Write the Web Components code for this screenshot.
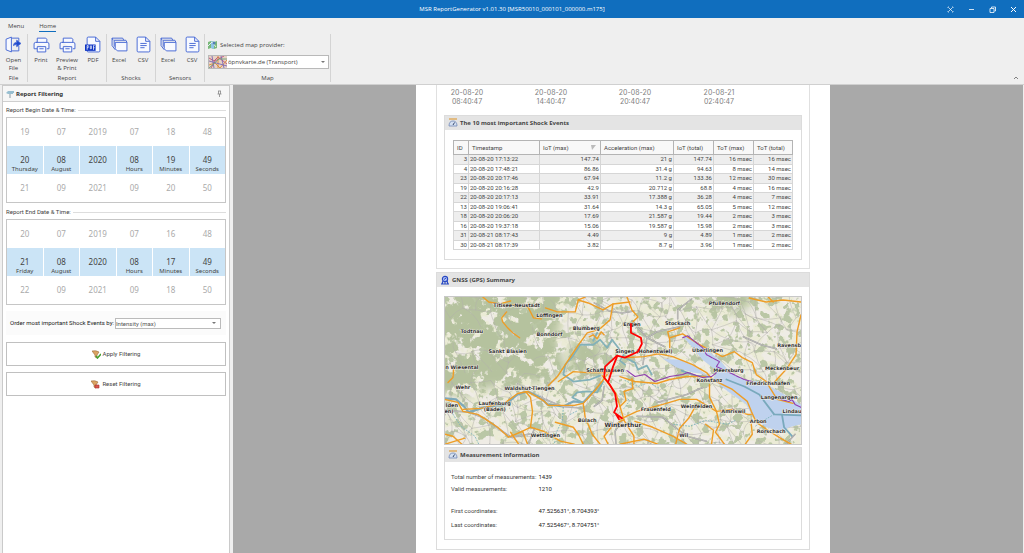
<!DOCTYPE html>
<html lang="en">
<head>
<meta charset="utf-8">
<title>MSR ReportGenerator</title>
<style>
html,body{margin:0;height:100%}
body{font:6px/8px "Open Sans","Noto Sans",sans-serif;color:#444;background:#efefef;overflow:hidden}
</style>
</head>
<body>
<report-app></report-app>
<script>
const define = (name, html) => customElements.define(name, class extends HTMLElement {
  constructor() {
    super();
    const t = document.createElement('template');
    t.innerHTML = '<style>*{box-sizing:border-box}button,select{font:inherit;color:inherit}</style>' + (typeof html === 'function' ? html(this) : html);
    this.attachShadow({ mode: 'open' }).appendChild(t.content.cloneNode(true));
  }
});

const printer = '<path d="M4 6V2h8l1 1v3M4 6H2.500Q1 6 1 7.500V12h3M13 12h2V7.500Q15 6 13.500 6H3M4 10h8v5H4z" fill="#f7f9ff"/><path d="M6 12h4"/>';
const sheets = '<path d="M1 2h10l1 2M2 4l-1-2v7l3 4"/><path d="M3 4h11l1 2M3 4v6"/><path d="M4 6h11v8H6l-2-2z" fill="#f7f9ff"/>';
const page = '<path d="M3 1h7l4 4v9q0 1-1 1H3q-1 0-1-1V2q0-1 1-1z" fill="#f7f9ff"/><path d="M10 1v4h4"/>';
const ICONS = {
  open: '<path d="M6 2h7v3M13 9v5H6" /><path d="M1 3l5-2v14l-5-2z" fill="#f7f9ff"/><path d="M8 9q0-3 3-3V4l4 3-4 3V8q-2 0-3 1z" fill="#1f4bd0"/>',
  print: printer, preview: printer, excel: sheets,
  csv: page + '<path d="M5 7h6M5 9h6M5 11h4"/>',
  pdf: page + '<path d="M0 8h10v6H0z" fill="#0f35c4" stroke="none"/><path d="M2 13V9h1v2H2M5 9v3h1V9M8 13V9h1M8 11h1" stroke="#fff" stroke-width=".7"/>'
};

define('title-bar', `
<style>
:host{display:flex;align-items:center;height:18px;background:#106ebe;color:#fff;position:relative}
h1{flex:1;margin:0;font:inherit;text-align:center}
nav{display:flex;gap:6px;position:absolute;right:3px}
button{width:15px;height:16px;padding:0;border:0;background:none;display:grid;place-items:center}
svg{width:7px;height:7px;fill:none;stroke:#fff}
</style>
<h1>MSR ReportGenerator v1.01.30 [MSR50010_000101_000000.m175]</h1>
<nav>
<button aria-label="Full screen"><svg viewBox="0 0 7 7"><path d="M1 2V1h1M5 1h1v1M6 5v1H5M2 6H1V5M2 2l3 3M5 2L2 5" stroke-width=".7"/></svg></button>
<button aria-label="Minimize"><svg viewBox="0 0 7 7"><path d="M1 3.500h5" stroke-width=".8"/></svg></button>
<button aria-label="Restore"><svg viewBox="0 0 7 7"><path d="M1 2.500h4v4H1zM2.500 2V1h4v4H5.500" stroke-width=".8"/></svg></button>
<button aria-label="Close"><svg viewBox="0 0 7 7"><path d="M1 1l5 5M6 1L1 6"/></svg></button>
</nav>`);

define('ribbon-button', el => `
<style>
:host{display:block;flex:none}
button{width:100%;padding:0;border:0;background:none;display:flex;flex-direction:column;align-items:center;gap:3px;text-align:center}
svg{width:17px;height:17px;fill:none;stroke:#4668d4;stroke-width:.9;stroke-linejoin:round}
span{line-height:8px}
</style>
<button><svg viewBox="0 0 16 16">${ICONS[el.getAttribute('icon')]}</svg><span><slot></slot></span></button>`);

define('ribbon-group', `
<style>
:host{display:flex;flex-direction:column;justify-content:space-between;border-right:1px solid #d4d4d4;height:48px}
div{display:flex;padding-top:2px}
::slotted(ribbon-button){width:var(--button,26px)}
footer{text-align:center}
</style>
<div><slot></slot></div><footer><slot name="label"></slot></footer>`);

define('map-provider', `
<style>
:host{display:block;width:125px;padding:4px 1px 0 3px}
label{display:flex;align-items:center;gap:3px}
label svg{width:9px;height:9px}
.box{display:flex;align-items:center;height:14px;margin-top:6px;border:1px solid #b9b9b9;background:#fff;position:relative}
.box svg{flex:none}
select{appearance:none;flex:1;min-width:0;border:0;padding:0;margin-left:1px;background:none;outline:0;height:12px;line-height:12px}
.arrow{position:absolute;right:3px;width:4px;height:3px;pointer-events:none}
</style>
<label for="p"><svg viewBox="0 0 9 9"><path d="M0 2l3-1 3 1 3-1v7l-3 1-3-1-3 1z" fill="#79b879"/><path d="M3 1l3 1v7L3 8z" fill="#8fc3e8"/><path d="M0 6l4-4 4 5" stroke="#e5edf3" fill="none"/><circle cx="6" cy="3" r="1.500" fill="#527fb5"/></svg>Selected map provider:</label>
<div class="box"><svg width="18" height="12" viewBox="0 0 18 12"><path fill="#e8d2c5" d="M0 0h18v12H0z"/><g fill="none" stroke-width=".9"><path d="M0 2l5 3 4-4 9 7M2 12l4-7 9-5" stroke="#b75178"/><path d="M0 9l6-2 5 5 7-8M9 0v12" stroke="#d98b39"/><path d="M3 0l2 12M12 0l3 12M0 5l18 5" stroke="#7a6ab8"/><path d="M0 12L10 3l8 0" stroke="#71a37b"/></g></svg>
<select id="p"><option>öpnvkarte.de (Transport)</option></select><svg class="arrow" viewBox="0 0 4 3"><path d="M0 0h4L2 2z" fill="#777"/></svg></div>`);

define('ribbon-bar', `
<style>
:host{display:block;height:67px;border-bottom:1px solid #d0d0d0;position:relative}
nav{display:flex;gap:15px;padding:4px 0 0 8px}
a{color:inherit;text-decoration:none;height:10px}
a[aria-current]{border-bottom:1px solid #106ebe}
.groups{display:flex;margin-top:2px}
.shrink{position:absolute;right:4px;bottom:2px;width:7px;height:6px;padding:0;border:0;background:none;display:grid}
.shrink svg{width:6px;height:4px}
</style>
<nav><a href="#menu">Menu</a><a href="#home" aria-current="page">Home</a></nav>
<div class="groups">
<ribbon-group style="--button:27px"><ribbon-button icon="open">Open<br>File</ribbon-button><span slot="label">File</span></ribbon-group>
<ribbon-group><ribbon-button icon="print">Print</ribbon-button><ribbon-button icon="preview">Preview<br>&amp; Print</ribbon-button><ribbon-button icon="pdf">PDF</ribbon-button><span slot="label">Report</span></ribbon-group>
<ribbon-group style="--button:24px"><ribbon-button icon="excel">Excel</ribbon-button><ribbon-button icon="csv">CSV</ribbon-button><span slot="label">Shocks</span></ribbon-group>
<ribbon-group style="--button:24px"><ribbon-button icon="excel">Excel</ribbon-button><ribbon-button icon="csv">CSV</ribbon-button><span slot="label">Sensors</span></ribbon-group>
<ribbon-group><map-provider></map-provider><span slot="label">Map</span></ribbon-group>
</div>
<button class="shrink" aria-label="Collapse the ribbon"><svg viewBox="0 0 6 4"><path d="M1 3l2-2 2 2" fill="none" stroke="#666" stroke-width=".8"/></svg></button>`);

define('date-wheel', el => {
  const rows = el.getAttribute('values').split(';').map(r => r.split(','));
  const names = [el.getAttribute('weekday'), 'August', '', 'Hours', 'Minutes', 'Seconds'];
  return `
<style>
:host{display:block;margin-bottom:4px}
.title{display:flex;align-items:center;gap:2px;height:10px;margin-bottom:2px}
.title::after{content:"";flex:1;border-top:1px solid #ddd}
.wheel{display:grid;grid-template-columns:repeat(6,1fr);grid-template-rows:repeat(3,28px);column-gap:1px;border:1px solid #c6c6c6;background:#fff;height:86px}
.wheel div{font:8px/10px "Noto Sans","Open Sans",sans-serif;text-align:center;color:#aaa;padding-top:9px}
.wheel .on{background:#cbe4f6;color:#444}
small{display:block;font-size:6px;line-height:8px}
</style>
<div class="title">${el.getAttribute('title-text')}</div>
<div class="wheel" role="group">${rows.map((r, i) => r.map((v, j) => `<div class="${i === 1 ? 'on' : ''}">${v}${i === 1 ? `<small>${names[j]}</small>` : ''}</div>`).join('')).join('')}</div>`;
});

define('filter-button', el => `
<style>
:host{display:block;margin-bottom:6px}
button{width:100%;height:24px;border:1px solid #c0c0c0;background:#fff;display:flex;align-items:center;justify-content:center;gap:2px;padding:0}
svg{width:9px;height:9px}
</style>
<button><svg viewBox="0 0 9 9"><path d="M0 1q4-1 7 1L5 5v3L3 7V5z" fill="#dba463" stroke="#9a6a38" stroke-width=".6"/>${el.hasAttribute('reset') ? '<path d="M4 5h4v3H4z" fill="#db5750" stroke="#a52f2c" stroke-width=".6"/>' : '<path d="M4 6l1.500 2L9 4" fill="none" stroke="#45a031" stroke-width="1.500"/>'}</svg><slot></slot></button>`);

define('filter-panel', `
<style>
:host{display:block;flex:none;width:228px;margin:0 3px 0 2px;background:#fff;border:1px solid #cacaca;border-bottom:0;font-family:Roboto,"Liberation Sans",sans-serif}
header{display:flex;align-items:center;height:16px;padding:0 6px 0 3px;gap:2px;background:#f6f6f6;border-bottom:1px solid #cfcfcf}
h2{margin:0;flex:1;font:bold 6px/8px "Noto Sans",sans-serif;color:#333}
header svg{width:8px;height:8px}
main{padding:3px 3px 0 3px}
.order{display:flex;align-items:center;gap:1px;height:24px;margin:6px 0 7px;padding:0 5px 0 4px;background:#fbfbfb;color:#222}
.order label{flex:none;white-space:nowrap}
.box{flex:1;height:11px;border:1px solid #bbb;background:#fff;position:relative;display:flex;color:#555}
select{appearance:none;flex:1;min-width:0;border:0;padding:0;outline:0;background:none;height:9px;line-height:9px}
.box svg{position:absolute;right:4px;top:3px;width:4px;height:3px;pointer-events:none}
</style>
<header><svg viewBox="0 0 8 8"><path d="M4 1v7" stroke="#899aa5"/><path d="M0 3l2-2h5v3H2zM6 1h2v2H6z" fill="#98bfd1"/></svg><h2>Report Filtering</h2><svg viewBox="0 0 8 8" fill="none" stroke="#888" stroke-width=".8"><path d="M3 1h3M3.500 1v3M5.500 1v3M2.500 4h4M4.500 4v3"/></svg></header>
<main>
<date-wheel title-text="Report Begin Date &amp; Time:" weekday="Thursday" values="19,07,2019,07,18,48;20,08,2020,08,19,49;21,09,2021,09,20,50"></date-wheel>
<date-wheel title-text="Report End Date &amp; Time:" weekday="Friday" values="20,07,2019,07,16,48;21,08,2020,08,17,49;22,09,2021,09,18,50"></date-wheel>
<div class="order"><label for="o">Order most important Shock Events by:</label><div class="box"><select id="o"><option>Intensity (max)</option></select><svg viewBox="0 0 4 3"><path d="M0 0h4L2 2z" fill="#777"/></svg></div></div>
<filter-button>Apply Filtering</filter-button>
<filter-button reset>Reset Filtering</filter-button>
</main>`);

const gauge = '<path d="M1 1h8" stroke="#e0a040" stroke-width="1.200"/><path d="M1 8q0-5 4-5t4 5z" fill="#d4e0f1" stroke="#7289b8" stroke-width=".8"/><path d="M5 7l1.500-2.500" stroke="#22355c" stroke-width=".9"/>';
const sat = '<path d="M1 9h8M2 9l1-3M8 9L7 6" fill="none" stroke="#2748c2" stroke-width="1.200"/><circle cx="5" cy="4" r="2.600" fill="#b9c8f8" stroke="#2748c2" stroke-width="1.200"/><path d="M4 4.500L6 3M5 7v2" stroke="#2748c2"/>';
define('report-section', el => `
<style>
:host{display:block;border:1px solid #dcdcdc;background:#fff}
header{display:flex;align-items:center;gap:2px;height:14px;padding-left:3px;background:#e4e4e4}
svg{width:10px;height:10px}
h2{margin:0;font:bold 6px/8px "Noto Sans",sans-serif;color:#444}
</style>
<header><svg viewBox="0 0 10 10">${el.getAttribute('icon') === 'gps' ? sat : gauge}</svg><h2>${el.getAttribute('heading')}</h2></header><slot></slot>`);

const EVENTS = `3|20-08-20 17:13:22|147.74|21 g|147.74|16 msec|16 msec
4|20-08-20 17:48:21|86.86|31.4 g|94.63|8 msec|14 msec
23|20-08-20 20:17:46|67.94|11.2 g|133.36|12 msec|30 msec
19|20-08-20 20:16:28|42.9|20.712 g|68.8|4 msec|16 msec
22|20-08-20 20:17:13|33.91|17.388 g|36.28|4 msec|7 msec
13|20-08-20 19:06:41|31.64|14.3 g|65.05|5 msec|12 msec
18|20-08-20 20:06:20|17.69|21.587 g|19.44|2 msec|3 msec
16|20-08-20 19:37:18|15.06|19.587 g|15.98|2 msec|3 msec
31|20-08-21 08:17:43|4.49|9 g|4.89|1 msec|2 msec
30|20-08-21 08:17:39|3.82|8.7 g|3.96|1 msec|2 msec`.split('\n').map(r => r.split('|'));

define('shock-table', `
<style>
:host{display:block;padding:10px 8px 9px}
table{width:100%;height:110px;table-layout:fixed;border-collapse:collapse}
th,td{border:1px solid #d6d6d6;padding:0 1px;line-height:8px;text-align:right;white-space:nowrap}
thead tr{height:14px}
th{font-weight:400;text-align:left;background:#f8f8f8;border-color:#b4b4b4;padding-left:3px}
td:nth-child(2){text-align:left}
tbody tr:nth-child(odd){background:#eee}
th svg{float:right;width:5px;height:5px;margin:1px 3px 0 0}
</style>
<table><colgroup><col style="width:15px"><col style="width:71px"><col style="width:61px"><col style="width:73px"><col style="width:40px"><col style="width:40px"><col></colgroup>
<thead><tr><th>ID</th><th>Timestamp</th><th>IoT (max)<svg viewBox="0 0 5 5"><path d="M0 0h5L1 5z" fill="#bbb"/></svg></th><th>Acceleration (max)</th><th>IoT (total)</th><th>ToT (max)</th><th>ToT (total)</th></tr></thead>
<tbody>${EVENTS.map(r => '<tr>' + r.map(c => `<td>${c}</td>`).join('') + '</tr>').join('')}</tbody></table>`);

const ROADS = [
 '38,0 44,5 55,7 66,4','62,15 57,21 58,25 63,31 68,36 75,41','66,8 78,8 84,11 89,21 97,22','101,11 113,15 131,15 134,3 144,6 159,13 169,7 186,5',
 '169,7 166,23 157,31 150,34 143,36 133,50 123,65 113,80 104,89','145,40 149,38 153,42 157,35 160,38','9,70 8,81 3,86','0,103 13,106 18,115 33,118 41,123 53,131 64,141 78,135 86,131 88,115 86,101 81,95',
 '18,113 36,112 61,106 73,97 83,95 100,105 104,109 130,109 139,107 150,95 157,86 163,78','111,126 129,131 134,138 139,148','78,135 83,148','66,136 74,148','86,131 99,135 116,145 130,148',
 '139,107 141,121 148,138 156,148','114,85 129,75 143,76 156,76 169,76','0,138 8,140 17,148','306,1 323,5 340,3 358,5','183,0 188,13 194,20 189,25','236,31 224,35 226,43 226,51',
 '226,41 239,37 256,48 279,60 291,55 299,61 309,66 313,78 323,85','329,88 343,73 353,58 354,35 358,18','209,56 229,60 249,68 263,76 269,83 289,93 304,105 308,115 313,126 326,135 339,143 348,148',
 '176,80 191,85 213,87 226,83 243,80 262,80','176,123 193,115 219,108 236,103 253,103 273,115 289,113 304,118 308,118','191,125 209,131 229,140 243,148','266,88 266,101 273,115 276,128 272,136 281,148',
 '188,82 189,92 180,95 182,104 176,110 180,124','232,148 236,132 245,122 253,108','180,123 168,130 160,140 164,148','180,124 190,140 190,148','308,128 309,138 302,148','323,85 329,95 334,103 350,107','183,61 200,60 216,57','141,0 134,3','176,148 200,143 214,148','158,79 165,88 172,97 176,110','0,148 20,142','325,0 330,5','262,128 270,134 268,148'
];
const GREY = ['193,120 219,121 243,140 263,145','213,106 243,98 259,91','188,24 203,41 221,50','236,30 213,35 203,41 199,68','234,22 234,13 248,2','0,114 24,116 40,122 66,141 90,137','90,132 84,148','150,6 165,14 178,16 190,14','150,110 158,104 160,90','178,124 171,135 172,148','343,148 352,138','300,40 318,48 333,52','96,101 118,110 140,112'];
const TEAL = ['175,52 168,43 163,51 156,43 149,48 136,48 128,60 121,68 119,78 129,85 146,83 156,79','159,85 153,96 143,95 133,96 128,101 138,106','183,62 191,66 194,73 203,69 208,78','181,56 176,64 181,68','153,36 149,44'];
const LABELS = [[72,10,'Titisee-Neustadt'],[105,20,'Löffingen'],[27,36,'Todtnau'],[105,39,'Bonndorf'],[142,33,'Blumberg'],[63,56,'Sankt Blasien'],[17,72,'n Wiesental'],[18,93,'Wehr'],[85,94,'Waldshut-Tiengen'],[50,109,'Laufenburg'],[50,115,'(Baden)'],[7,111,'lden'],[4,117,'en)'],[143,126,'Bülach'],[101,141,'Wettingen'],[161,75,'Schaffhausen'],[200,56,'Singen (Hohentwiel)'],[188,29,'Engen'],[234,28,'Stockach'],[281,8,'Pfullendorf'],[264,55,'Überlingen'],[346,50,'Ravensb'],[285,75,'Meersburg'],[339,73,'Meckenbeur'],[266,85,'Konstanz'],[325,88,'Friedrichshafen'],[336,103,'Langenargen'],[349,117,'Lindau'],[315,127,'Arbon'],[328,137,'Rorschach'],[290,117,'Amriswil'],[253,112,'Weinfelden'],[212,115,'Frauenfeld'],[240,141,'Wil']];
const line = p => `<polyline points="${p}"/>`;

function minorRoads() {
  let seed = 7;
  const rnd = () => (seed = (seed * 16807) % 2147483647) / 2147483647;
  const cols = 25, rows = 11, pts = [];
  for (let r = 0; r <= rows; r++) for (let c = 0; c <= cols; c++) pts.push([Math.round(c * 15 - 4 + rnd() * 13), Math.round(r * 15 - 6 + rnd() * 13)]);
  let d = '';
  const link = (a, b) => { d += `M${a}Q${Math.round((a[0] + b[0]) / 2 + rnd() * 8 - 4)},${Math.round((a[1] + b[1]) / 2 + rnd() * 8 - 4)} ${b}`; };
  for (let r = 0; r < rows; r++) for (let c = 0; c < cols; c++) {
    const a = pts[r * (cols + 1) + c];
    const keep = c < 8 && r < 6 ? .35 : .85;
    if (rnd() < keep) link(a, pts[r * (cols + 1) + c + 1]);
    if (rnd() < keep) link(a, pts[(r + 1) * (cols + 1) + c]);
    if (rnd() < keep - .3) link(a, pts[(r + 1) * (cols + 1) + c + 1]);
  }
  return d;
}

define('gnss-map', `
<style>
:host{display:block}
svg{display:block;width:100%;fill:none;stroke-linejoin:round;stroke-linecap:round}
text{font:bold 5px "DejaVu Sans",sans-serif;fill:#333;stroke:#f4f1e8;stroke-width:1px;paint-order:stroke;text-anchor:middle}
.city{font-size:6px}
</style>
<svg viewBox="0 0 358 148" role="img" aria-label="GNSS track from Engen to Winterthur">
<defs>
<filter id="sparse" x="0" y="0" width="100%" height="100%" color-interpolation-filters="sRGB"><feTurbulence type="fractalNoise" baseFrequency=".12" numOctaves="3" seed="4"/><feColorMatrix values="0 0 0 0 .73 0 0 0 0 .78 0 0 0 0 .65 12 0 0 0 -6.4"/></filter>
<filter id="dense" x="0" y="0" width="100%" height="100%" color-interpolation-filters="sRGB"><feTurbulence type="fractalNoise" baseFrequency=".08" numOctaves="4" seed="9"/><feColorMatrix values="0 0 0 0 .71 0 0 0 0 .76 0 0 0 0 .62 12 0 0 0 -4.6"/></filter>
<filter id="fields" x="0" y="0" width="100%" height="100%" color-interpolation-filters="sRGB"><feTurbulence type="fractalNoise" baseFrequency=".1" numOctaves="2" seed="21"/><feColorMatrix values="0 0 0 0 .92 0 0 0 0 .92 0 0 0 0 .84 12 0 0 0 -5.6"/></filter>
<filter id="soft"><feGaussianBlur stdDeviation="5"/></filter>
<mask id="wood"><path d="M-10-10H125L112 40 122 75 90 86 40 92 20 100-10 96zM128 40l28 5 2 28-32 4zM260-10h50l-6 22-30 8z" fill="#fff" filter="url(#soft)"/></mask>
</defs>
<path d="M0 0h358v148H0z" fill="#efece5"/>
<path d="M0 0h358v148H0z" filter="url(#fields)"/>
<path d="M0 0h358v148H0z" filter="url(#sparse)"/>
<g mask="url(#wood)"><path d="M0 0h358v148H0z" filter="url(#dense)"/></g>
<path d="${minorRoads()}" stroke="#b3b1ac" stroke-width=".5"/>
<path d="M239 39l6 1 14 10 17 13 10 12 17 9 16 1 17 10 22 13v20l-12 3-7 5-16-5-14-11-6-12-17-12-17-13 5-8-15-12zM219 62l17 1 12 5 15 10-14-2-16-5zM65 34l5 2-1 3z" fill="#bfd2ee"/>
<polyline points="0,102 11,103 19,110 24,116 39,111 61,108 73,98 83,95 96,101 103,108 119,110 129,105 139,106 153,91" stroke="#7fa9ba" stroke-width="2.200"/>
<g stroke="#83b1b8" stroke-width="1.800">${TEAL.map(line).join('')}</g>
<g stroke="#7db4bc" stroke-width=".9" stroke-dasharray="1 2">${['8,118 16,130 30,140 34,148','119,111 118,124 112,136 110,148','181,84 194,90 205,86 216,92','230,128 246,130 262,124 284,128 292,124','176,98 186,104 180,112','331,118 319,125 312,130','126,118 134,114'].map(line).join('')}</g>
<g stroke="#79a9bc" stroke-width="1.800"><polyline points="283,83 301,90 316,98 331,118 358,119"/><polyline points="339,119 341,131 349,140"/><polyline points="238,74 252,79 266,80"/></g>
<g stroke="#999" stroke-width="1.500">${GREY.map(line).join('')}</g><g stroke="#e3e1dc" stroke-width=".5">${GREY.map(line).join('')}</g>
<g stroke="#ee9d26" stroke-width="1.400">${ROADS.map(line).join('')}</g>
<g stroke="#8f3db0" stroke-width="1.100"><polyline points="183,74 191,80 201,78 211,85 226,80 239,78 244,76 259,81 268,80 273,76"/><polyline points="239,41 244,39 259,51 263,58 276,65 273,70 286,76 301,83 309,85" stroke-dasharray="4 1"/><polyline points="338,103 346,105 349,103 352,108 358,111"/></g>
${LABELS.map(([x, y, t]) => `<text x="${x}" y="${y}">${t}</text>`).join('')}<text class="city" x="179" y="131">Winterthur</text>
<g stroke="#f00" stroke-width="1.800"><polyline points="187,27 187,36 197,41 198,47 194,55 181,61 173,59 161,70 160,81 165,87 171,97 173,110 170,116 178,122 172,118 175,123"/><polyline points="173,60 169,70 164,86"/></g>
</svg>`);

define('measurement-info', `
<style>
:host{display:block;padding:11px 7px 10px 6px}
dl{display:grid;grid-template-columns:max-content 1fr;column-gap:2px;grid-template-rows:12px 22px 14px 8px;margin:0}
dt,dd{margin:0;line-height:8px;white-space:nowrap}
dd{color:#222}
</style>
<dl><dt>Total number of measurements:</dt><dd>1439</dd><dt>Valid measurements:</dt><dd>1210</dd><dt>First coordinates:</dt><dd>47.525631°, 8.704393°</dd><dt>Last coordinates:</dt><dd>47.525467°, 8.704751°</dd></dl>`);

define('report-page', `
<style>
:host{display:block;box-sizing:border-box;width:414px;background:#fff;padding:0 20px;font-family:Roboto,"Liberation Sans",sans-serif}
.sheet{border:1px solid #e0e0e0;border-top:0;padding:3px 7px 8px;margin-bottom:3px}
.axis{display:grid;grid-template-columns:repeat(4,84px);font:7px/9px Inter,sans-serif;color:#808080;text-align:center;margin:0 0 9px -19px}
.body{padding:9px 7px}
gnss-map{margin-bottom:2px;border:1px solid #c8c8c8}
</style>
<div class="sheet">
<div class="axis"><span>20-08-20<br>08:40:47</span><span>20-08-20<br>14:40:47</span><span>20-08-20<br>20:40:47</span><span>20-08-21<br>02:40:47</span></div>
<report-section heading="The 10 most important Shock Events"><shock-table></shock-table></report-section>
</div>
<report-section icon="gps" heading="GNSS (GPS) Summary"><div class="body"><gnss-map></gnss-map><report-section heading="Measurement information"><measurement-info></measurement-info></report-section></div></report-section>`);

define('report-app', `
<style>
:host{display:flex;flex-direction:column;height:100%}
.work{flex:1;display:flex;min-height:0}
.view{flex:1;min-width:0;overflow:hidden;background:#a9a9a9;display:flex;justify-content:center;padding-right:10px;margin-right:1px}
report-page{flex:none;height:max-content;min-height:100%}
</style>
<title-bar></title-bar><ribbon-bar></ribbon-bar>
<div class="work"><filter-panel></filter-panel><div class="view"><report-page></report-page></div></div>`);
</script>
</body>
</html>
